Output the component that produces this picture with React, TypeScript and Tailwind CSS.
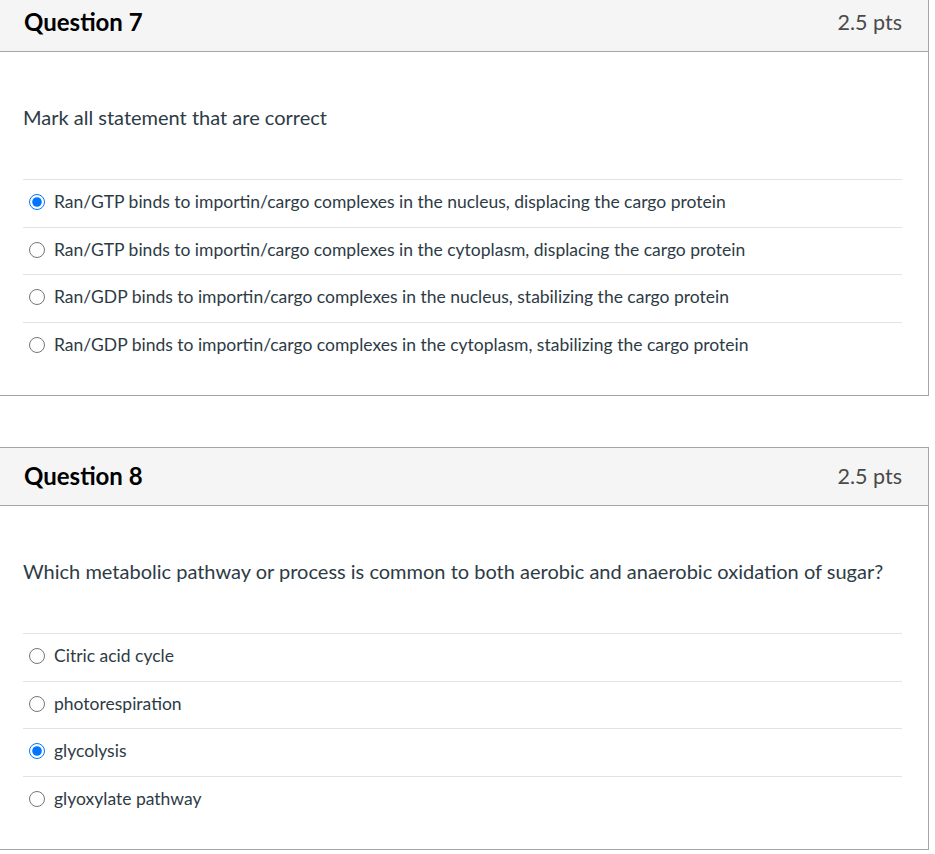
type Question = {
  title: string;
  points: string;
  text: string;
  answers: string[];
  selected: number;
};

const questions: Question[] = [
  {
    title: 'Question 7',
    points: '2.5 pts',
    text: 'Mark all statement that are correct',
    answers: [
      'Ran/GTP binds to importin/cargo complexes in the nucleus, displacing the cargo protein',
      'Ran/GTP binds to importin/cargo complexes in the cytoplasm, displacing the cargo protein',
      'Ran/GDP binds to importin/cargo complexes in the nucleus, stabilizing the cargo protein',
      'Ran/GDP binds to importin/cargo complexes in the cytoplasm, stabilizing the cargo protein',
    ],
    selected: 0,
  },
  {
    title: 'Question 8',
    points: '2.5 pts',
    text: 'Which metabolic pathway or process is common to both aerobic and anaerobic oxidation of sugar?',
    answers: ['Citric acid cycle', 'photorespiration', 'glycolysis', 'glyoxylate pathway'],
    selected: 2,
  },
];

function QuestionCard({ q, name }: { q: Question; name: string }) {
  return (
    <div className="border-y border-r border-[#a5a5a5] bg-white">
      <div className="flex h-[58px] items-center justify-between border-b border-[#a5a5a5] bg-[#f5f5f5] pl-[24px] pr-[26px]">
        <h2 className="pb-[1px] text-[24px] font-bold text-[#000000]">{q.title}</h2>
        <span className="pb-[1px] text-[21.5px] text-[#4a4a4a]">{q.points}</span>
      </div>
      <div className="pl-[23px] pr-[26px] pb-[26px]">
        <p className="pt-[51px] pb-[48px] text-[20px] leading-[28px] text-[#2d3b45]">{q.text}</p>
        <div>
          {q.answers.map((a, i) => (
            <label
              key={i}
              className="flex items-center gap-[9px] border-t border-[#e2e2e2] pl-[6px] pt-[10px] pb-[12.5px] text-[17.5px] leading-6 text-[#2d3b45]"
            >
              <input
                type="radio"
                name={name}
                defaultChecked={i === q.selected}
                className="m-0 h-[16px] w-[16px] accent-[#0075ff]"
              />
              <span>{a}</span>
            </label>
          ))}
        </div>
      </div>
    </div>
  );
}

export default function App() {
  return (
    <div
      className="min-h-screen bg-white pr-[6px]"
      style={{ fontFamily: 'Lato, "Noto Sans", sans-serif' }}
    >
      <div className="-mt-[7px] flex flex-col gap-[51px]">
        {questions.map((q, i) => (
          <QuestionCard key={i} q={q} name={`q${i}`} />
        ))}
      </div>
    </div>
  );
}
